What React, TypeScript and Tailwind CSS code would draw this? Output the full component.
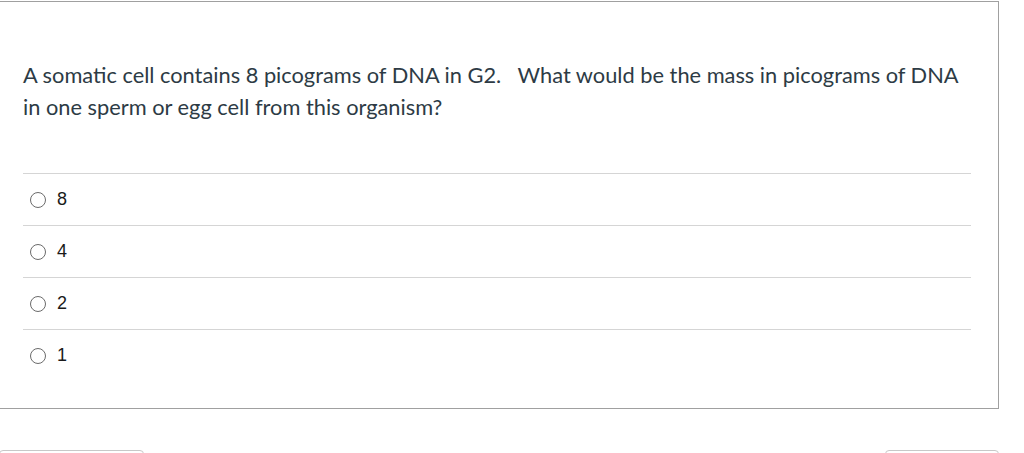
export default function App() {
  const options = ["8", "4", "2", "1"];
  return (
    <div className="w-[1024px] h-[453px] overflow-hidden bg-white">
      <div className="ml-[-1px] mt-[1px] w-[1000px] h-[408px] border border-[#a0a0a0] pt-[57px] pl-[23px] pr-[27px]">
        <p className="text-[21.8px] leading-[32px] text-[#2d3b45] font-['Lato',sans-serif]">
          A somatic cell contains 8 picograms of DNA in G2.&nbsp;&nbsp; What would be the mass in picograms of DNA in one sperm or egg cell from this organism?
        </p>
        <div className="mt-[50px]">
          {options.map((o) => (
            <div
              key={o}
              className="h-[52px] border-t border-[#d5d5d5] flex items-center pl-[7px]"
            >
              <span className="w-[16px] h-[16px] rounded-full border border-[#6b6b6b] bg-white" />
              <span className="ml-[11px] text-[18px] text-[#1a1a1a] font-['Liberation_Sans',Arial,sans-serif]">
                {o}
              </span>
            </div>
          ))}
        </div>
      </div>
      <div className="mt-[41px] flex justify-between">
        <div className="ml-[-1px] w-[145px] h-[20px] border border-[#c8c8c8] rounded-[4px]" />
        <div className="mr-[25px] w-[114px] h-[20px] border border-[#c8c8c8] rounded-[4px]" />
      </div>
    </div>
  );
}
